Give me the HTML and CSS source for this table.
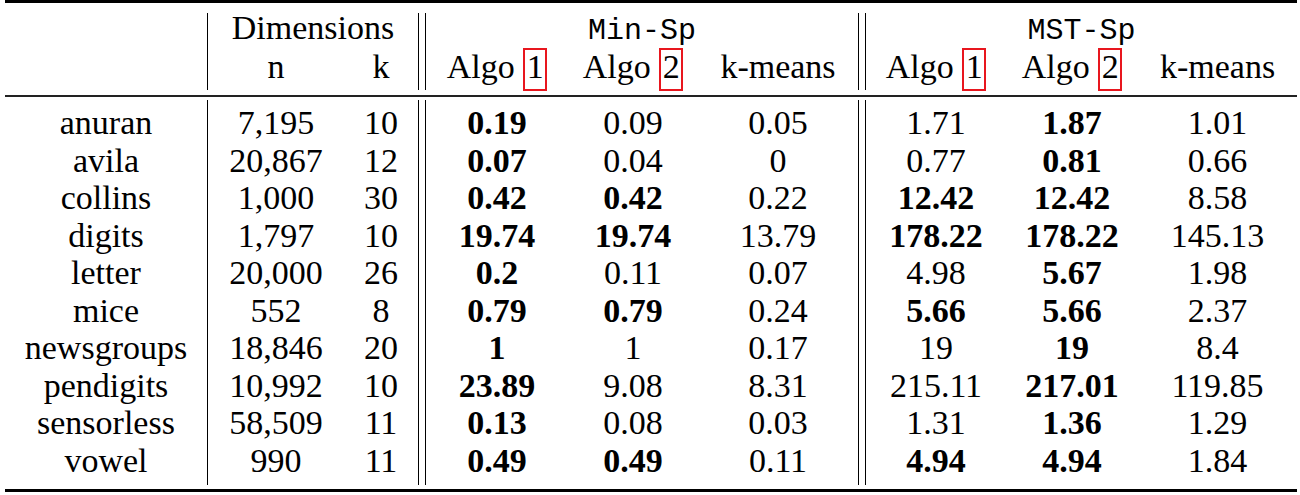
FILE: index.html
```html
<!DOCTYPE html>
<html lang="en">
<head>
    <meta charset="UTF-8">
    <title>Spanning objectives</title>
    <link rel="stylesheet" href="styles.css">
</head>
<body>

<div class="booktab">
    <hr class="rule toprule">

    <table class="head">
        <colgroup>
            <col class="c-name"><col class="c-n"><col class="c-k"><col class="c-gap">
            <col class="c-m1"><col class="c-m2"><col class="c-m3"><col class="c-gap">
            <col class="c-s1"><col class="c-s2"><col class="c-s3">
        </colgroup>
        <tr>
            <td class="vr" rowspan="2"></td>
            <td class="vr" colspan="2">Dimensions</td>
            <td class="vr" rowspan="2"></td>
            <td class="vr" colspan="3"><span class="tt">Min-Sp</span></td>
            <td class="vr" rowspan="2"></td>
            <td colspan="3"><span class="tt">MST-Sp</span></td>
        </tr>
        <tr>
            <td>n</td>
            <td class="vr">k</td>
            <td>Algo <span class="ref">1</span></td>
            <td>Algo <span class="ref">2</span></td>
            <td class="vr">k-means</td>
            <td>Algo <span class="ref">1</span></td>
            <td>Algo <span class="ref">2</span></td>
            <td>k-means</td>
        </tr>
    </table>

    <hr class="rule midrule">

    <table class="body">
        <colgroup>
            <col class="c-name"><col class="c-n"><col class="c-k"><col class="c-gap">
            <col class="c-m1"><col class="c-m2"><col class="c-m3"><col class="c-gap">
            <col class="c-s1"><col class="c-s2"><col class="c-s3">
        </colgroup>
        <tr>
            <td class="vr">anuran</td><td>7,195</td><td class="vr">10</td>
            <td class="vr" rowspan="10"></td>
            <td><b>0.19</b></td><td>0.09</td><td class="vr">0.05</td>
            <td class="vr" rowspan="10"></td>
            <td>1.71</td><td><b>1.87</b></td><td>1.01</td>
        </tr>
        <tr>
            <td class="vr">avila</td><td>20,867</td><td class="vr">12</td>
            <td><b>0.07</b></td><td>0.04</td><td class="vr">0</td>
            <td>0.77</td><td><b>0.81</b></td><td>0.66</td>
        </tr>
        <tr>
            <td class="vr">collins</td><td>1,000</td><td class="vr">30</td>
            <td><b>0.42</b></td><td><b>0.42</b></td><td class="vr">0.22</td>
            <td><b>12.42</b></td><td><b>12.42</b></td><td>8.58</td>
        </tr>
        <tr>
            <td class="vr">digits</td><td>1,797</td><td class="vr">10</td>
            <td><b>19.74</b></td><td><b>19.74</b></td><td class="vr">13.79</td>
            <td><b>178.22</b></td><td><b>178.22</b></td><td>145.13</td>
        </tr>
        <tr>
            <td class="vr">letter</td><td>20,000</td><td class="vr">26</td>
            <td><b>0.2</b></td><td>0.11</td><td class="vr">0.07</td>
            <td>4.98</td><td><b>5.67</b></td><td>1.98</td>
        </tr>
        <tr>
            <td class="vr">mice</td><td>552</td><td class="vr">8</td>
            <td><b>0.79</b></td><td><b>0.79</b></td><td class="vr">0.24</td>
            <td><b>5.66</b></td><td><b>5.66</b></td><td>2.37</td>
        </tr>
        <tr>
            <td class="vr">newsgroups</td><td>18,846</td><td class="vr">20</td>
            <td><b>1</b></td><td>1</td><td class="vr">0.17</td>
            <td>19</td><td><b>19</b></td><td>8.4</td>
        </tr>
        <tr>
            <td class="vr">pendigits</td><td>10,992</td><td class="vr">10</td>
            <td><b>23.89</b></td><td>9.08</td><td class="vr">8.31</td>
            <td>215.11</td><td><b>217.01</b></td><td>119.85</td>
        </tr>
        <tr>
            <td class="vr">sensorless</td><td>58,509</td><td class="vr">11</td>
            <td><b>0.13</b></td><td>0.08</td><td class="vr">0.03</td>
            <td>1.31</td><td><b>1.36</b></td><td>1.29</td>
        </tr>
        <tr>
            <td class="vr">vowel</td><td>990</td><td class="vr">11</td>
            <td><b>0.49</b></td><td><b>0.49</b></td><td class="vr">0.11</td>
            <td><b>4.94</b></td><td><b>4.94</b></td><td>1.84</td>
        </tr>
    </table>

    <hr class="rule bottomrule">
</div>

</body>
</html>
```

FILE: styles.css
```css
/* table in the booktabs look */
body {
    margin: 0;
    background: #fff;
    color: #000;
    font-family: "Liberation Serif", Tinos, "DejaVu Serif", serif;
}
.booktab {
    width: 1292px;
    margin-left: 5px;
}
.rule {
    border: 0;
    margin: 0;
    background: #000;
}
.toprule {
    height: 3px;
}
.midrule {
    height: 2px;
    margin: 5px 0 3px;
    background: #222;
}
.bottomrule {
    height: 3px;
    margin-top: 4px;
}
table {
    width: 100%;
    table-layout: fixed;
    border-collapse: separate;
    border-spacing: 0;
    font-family: "Liberation Serif", Tinos, "DejaVu Serif", serif;
    font-size: 34px;
}
td {
    padding: 0;
    text-align: center;
    white-space: nowrap;
}
.vr {
    border-right: 1px solid #000;
}
/* column widths, shared by both tables */
.c-name { width: 203px; }
.c-n { width: 136px; }
.c-k { width: 75px; }
.c-gap { width: 7px; }
.c-m1 { width: 142px; }
.c-m2 { width: 130px; }
.c-m3 { width: 161px; }
.c-s1 { width: 140px; }
.c-s2 { width: 132px; }
.c-s3 { width: 159px; }

.head {
    margin-top: 10px;
}
.head td {
    height: 38.5px;
    line-height: 29.5px;
    vertical-align: top;
}
.tt {
    font-family: "Liberation Mono", "DejaVu Sans Mono", monospace;
    font-size: 30px;
}
/* link box around the algorithm number */
.ref {
    display: inline-block;
    line-height: 33px;
    padding: 0 1.5px 6px;
    margin: -4px 0 -10px;
    border: 2px solid #e8161e;
}
.body td {
    line-height: 37.5px;
    vertical-align: top;
}
.body tr:first-child td {
    padding-top: 4px;
}
.body tr:last-child td {
    padding-bottom: 6px;
}
```
